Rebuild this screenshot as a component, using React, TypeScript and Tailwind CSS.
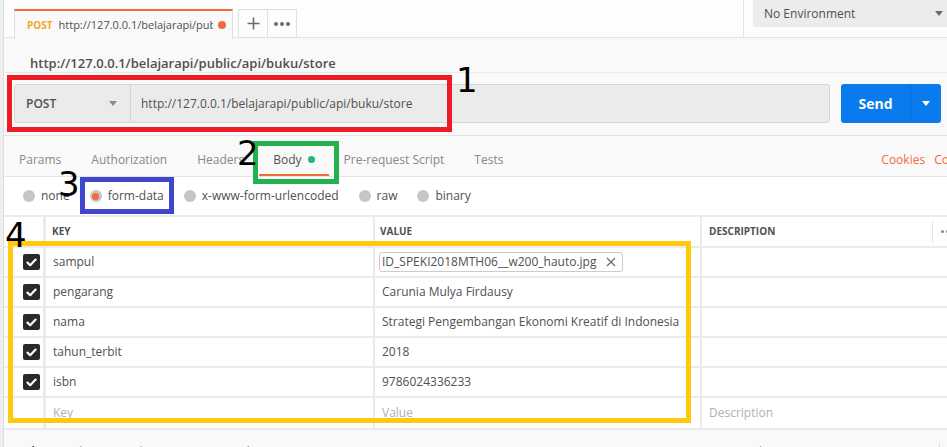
import React from "react";

function Check() {
  return (
    <div className="w-[17px] h-[16px] rounded-[2px] bg-[#2a2a2a] flex items-center justify-center">
      <svg width="11" height="9" viewBox="0 0 11 9">
        <path d="M1.5 4.6 L4.2 7.2 L9.6 1.6" stroke="#fff" strokeWidth="2.2" fill="none" strokeLinecap="round" strokeLinejoin="round" />
      </svg>
    </div>
  );
}

function Radio({ on }: { on?: boolean }) {
  return (
    <div className="w-[12px] h-[12px] rounded-full bg-[#c6c6c6] flex items-center justify-center">
      {on && <div className="w-[7px] h-[7px] rounded-full bg-[#f26b3a]" />}
    </div>
  );
}

const rows = [
  { k: "sampul", v: "file" },
  { k: "pengarang", v: "Carunia Mulya Firdausy" },
  { k: "nama", v: "Strategi Pengembangan Ekonomi Kreatif di Indonesia" },
  { k: "tahun_terbit", v: "2018" },
  { k: "isbn", v: "9786024336233" },
];

export default function App() {
  return (
    <div
      className="relative w-[947px] h-[447px] overflow-hidden bg-[#f9f9f9] flex text-[#505050]"
      style={{ fontFamily: "'Open Sans', sans-serif" }}
    >
      {/* left strip */}
      <div className="w-[4px] shrink-0 bg-[#efefef] border-r border-[#dedede]" />

      <div className="flex-1 flex flex-col min-w-0">
        {/* tab bar */}
        <div className="h-[38px] shrink-0 flex border-b border-[#e3e3e3] bg-[#fdfdfd]">
          <div className="w-[10px]" />
          <div className="mt-[8px] w-[219px] h-[30px] bg-[#f9f9f9] border-t-2 border-t-[#f26b3a] border-x border-x-[#e0e0e0] flex items-center pl-[12px] pr-[6px] relative top-[1px]">
            <span className="text-[10px] font-bold text-[#f5a623] mr-[6px]">POST</span>
            <span className="text-[11px] text-[#505050] whitespace-nowrap overflow-hidden w-[159px]">http://127.0.0.1/belajarapi/public/api/buku/store</span>
            <div className="ml-[5px] w-[8px] h-[8px] rounded-full bg-[#f26b3a]" />
          </div>
          <div className="ml-[5px] mt-[9px] h-[29px] flex border border-[#e0e0e0] bg-[#fdfdfd]">
            <div className="w-[29px] flex items-center justify-center border-r border-[#e0e0e0]">
              <svg width="13" height="13" viewBox="0 0 13 13">
                <path d="M6.5 0.5 V12.5 M0.5 6.5 H12.5" stroke="#6b6b6b" strokeWidth="1.6" />
              </svg>
            </div>
            <div className="w-[28px] flex items-center justify-center gap-[2px]">
              <div className="w-[4px] h-[4px] rounded-full bg-[#6b6b6b]" />
              <div className="w-[4px] h-[4px] rounded-full bg-[#6b6b6b]" />
              <div className="w-[4px] h-[4px] rounded-full bg-[#6b6b6b]" />
            </div>
          </div>
          <div className="flex-1" />
          <div className="w-px h-[37px] bg-[#e3e3e3] mr-[9px]" />
          <div className="w-[194px] h-[27px] bg-[#ececec] rounded-bl-[3px] flex items-center pl-[11px] justify-between pr-[4px]">
            <span className="text-[12px] text-[#505050]">No Environment</span>
            <svg width="8" height="5" viewBox="0 0 8 5"><path d="M0 0 H8 L4 5 Z" fill="#6b6b6b" /></svg>
          </div>
        </div>

        {/* title row */}
        <div className="h-[35px] shrink-0 border-b border-[#eaeaea] pl-[26px] pt-[12px]">
          <span className="text-[13px] font-semibold text-[#505050] leading-[18px]">http://127.0.0.1/belajarapi/public/api/buku/store</span>
        </div>

        {/* url row */}
        <div className="h-[63px] shrink-0 border-b border-[#e3e3e3] flex items-start pt-[11px] pl-[10px]">
          <div className="flex h-[39px] w-[816px] rounded-[3px] border border-[#d6d6d6] bg-[#ebebeb]">
            <div className="w-[116px] flex items-center justify-between pl-[11px] pr-[13px] border-r border-[#d6d6d6]">
              <span className="text-[12px] font-semibold text-[#505050]">POST</span>
              <svg width="8" height="5" viewBox="0 0 8 5"><path d="M0 0 H8 L4 5 Z" fill="#8a8a8a" /></svg>
            </div>
            <div className="flex items-center pl-[10px] text-[12px] text-[#505050]">http://127.0.0.1/belajarapi/public/api/buku/store</div>
          </div>
          <div className="ml-[11px] h-[39px] w-[100px] rounded-[3px] bg-[#097bed] flex">
            <div className="w-[69px] flex items-center justify-center text-white text-[14px] font-bold">Send</div>
            <div className="w-px bg-[#0a6fd4]" />
            <div className="flex-1 flex items-center justify-center">
              <svg width="8" height="5" viewBox="0 0 8 5"><path d="M0 0 H8 L4 5 Z" fill="#fff" /></svg>
            </div>
          </div>
        </div>

        {/* request tabs */}
        <div className="h-[41px] shrink-0 border-b border-[#e3e3e3] flex items-stretch text-[12px] text-[#888888]">
          <div className="px-[15px] pt-[7px] flex items-center">Params</div>
          <div className="px-[15px] pt-[7px] flex items-center">Authorization</div>
          <div className="px-[15px] pt-[7px] flex items-center">Headers</div>
          <div className="px-[14px] pt-[9px] flex items-center gap-[6px] text-[#505050] border-b-2 border-[#f26b3a]">
            Body <div className="w-[7px] h-[7px] rounded-full bg-[#26b47f]" />
          </div>
          <div className="px-[15px] pt-[7px] flex items-center">Pre-request Script</div>
          <div className="px-[15px] pt-[7px] flex items-center">Tests</div>
          <div className="flex-1" />
          <div className="flex items-center pt-[7px] text-[#f26b3a] whitespace-nowrap -mr-[16px]">
            <span className="mr-[9px]">Cookies</span>
            <span>Code</span>
          </div>
        </div>

        {/* radio row */}
        <div className="h-[38px] shrink-0 flex items-center pl-[19px] gap-[20px] text-[12px] text-[#505050] bg-[#ffffff]">
          <div className="flex items-center gap-[6px]"><Radio /><span>none</span></div>
          <div className="flex items-center gap-[6px]"><Radio on /><span>form-data</span></div>
          <div className="flex items-center gap-[6px]"><Radio /><span>x-www-form-urlencoded</span></div>
          <div className="flex items-center gap-[6px]"><Radio /><span>raw</span></div>
          <div className="flex items-center gap-[6px]"><Radio /><span>binary</span></div>
        </div>

        {/* table */}
        <div className="bg-white border-t-2 border-[#ebebeb] flex flex-col">
          <div className="h-[31px] flex border-b-2 border-[#ebebeb] text-[10px] font-bold text-[#505050]">
            <div className="w-[42px] border-r-[3px] border-[#ebebeb]" />
            <div className="w-[329px] border-r-2 border-[#ebebeb] flex items-center pl-[6px]">KEY</div>
            <div className="w-[327px] border-r-2 border-[#ebebeb] flex items-center pl-[5px]">VALUE</div>
            <div className="flex-1 flex items-center pl-[7px]">DESCRIPTION</div>
            <div className="w-px h-[22px] self-center bg-[#e3e3e3]" />
            <div className="w-[14px] flex items-center pl-[8px] gap-[2px]">
              <div className="w-[3px] h-[3px] shrink-0 rounded-full bg-[#888]" />
              <div className="w-[3px] h-[3px] shrink-0 rounded-full bg-[#888]" />
            </div>
          </div>
          {rows.map((r) => (
            <div key={r.k} className="h-[30px] flex border-b-2 border-[#ebebeb] text-[12px] text-[#505050]">
              <div className="w-[42px] border-r-[3px] border-[#ebebeb] flex items-center pl-[19px]"><Check /></div>
              <div className="w-[329px] border-r-2 border-[#ebebeb] flex items-center pl-[7px]">{r.k}</div>
              <div className="w-[327px] border-r-2 border-[#ebebeb] flex items-center pl-[7px]">
                {r.v === "file" ? (
                  <div className="-ml-[3px] h-[20px] w-[244px] border border-[#cccccc] rounded-[3px] flex items-center pl-[2px] pr-[6px] justify-between">
                    <span>ID_SPEKI2018MTH06__w200_hauto.jpg</span>
                    <svg width="10" height="10" viewBox="0 0 10 10"><path d="M1 1 L9 9 M9 1 L1 9" stroke="#707070" strokeWidth="1.4" /></svg>
                  </div>
                ) : (
                  r.v
                )}
              </div>
              <div className="flex-1" />
            </div>
          ))}
          <div className="h-[30px] flex text-[12px] text-[#b0b0b0]">
            <div className="w-[42px] border-r-[3px] border-[#ebebeb]" />
            <div className="w-[329px] border-r-2 border-[#ebebeb] flex items-center pl-[7px]">Key</div>
            <div className="w-[327px] border-r-2 border-[#ebebeb] flex items-center pl-[7px]">Value</div>
            <div className="flex-1 flex items-center pl-[7px]">Description</div>
          </div>
        </div>

        {/* footer */}
        <div className="flex-1 border-t-2 border-[#ebebeb] bg-[#f9f9f9] flex items-start pt-[13px] text-[12px] whitespace-nowrap">
          <span className="ml-[8px] font-semibold text-[#303030]">Body</span>
          <span className="ml-[16px] text-[#808080]">Cookies</span>
          <span className="ml-[12px] text-[#808080]">Headers <span className="text-[#26b47f]">(4)</span></span>
          <span className="ml-[16px] text-[#808080]">Test Results</span>
          <div className="flex-1" />
          <span className="text-[#808080]">Status: <span className="text-[#26b47f]">201 Created</span></span>
          <span className="ml-[14px] text-[#808080]">Time: <span className="text-[#26b47f]">1096 ms</span></span>
          <span className="ml-[14px] text-[#808080]">Size: <span className="text-[#26b47f]">598 B</span></span>
          <div className="ml-[8px] w-px h-[20px] bg-[#dcdcdc] mr-[7px]" />
        </div>
      </div>

      {/* annotations */}
      <div className="absolute left-[7px] top-[75px] w-[445px] h-[57px] border-[5px] border-[#ed1c24]" />
      <div className="absolute left-[253px] top-[141px] w-[86px] h-[43px] border-[5px] border-[#22b14c]" />
      <div className="absolute left-[80px] top-[177px] w-[94px] h-[37px] border-[5px] border-[#3f48cc]" />
      <div className="absolute left-[8px] top-[241px] w-[683px] h-[182px] border-[5px] border-[#ffc90e]" />
      {[
        { t: "1", c: "left-[456px] top-[63px]" },
        { t: "2", c: "left-[237px] top-[136px]" },
        { t: "3", c: "left-[58px] top-[167px]" },
        { t: "4", c: "left-[5px] top-[218px]" },
      ].map((a) => (
        <div
          key={a.t}
          className={`absolute text-[34px] leading-none text-black ${a.c}`}
          style={{ fontFamily: "'DejaVu Sans', sans-serif" }}
        >
          {a.t}
        </div>
      ))}
    </div>
  );
}
